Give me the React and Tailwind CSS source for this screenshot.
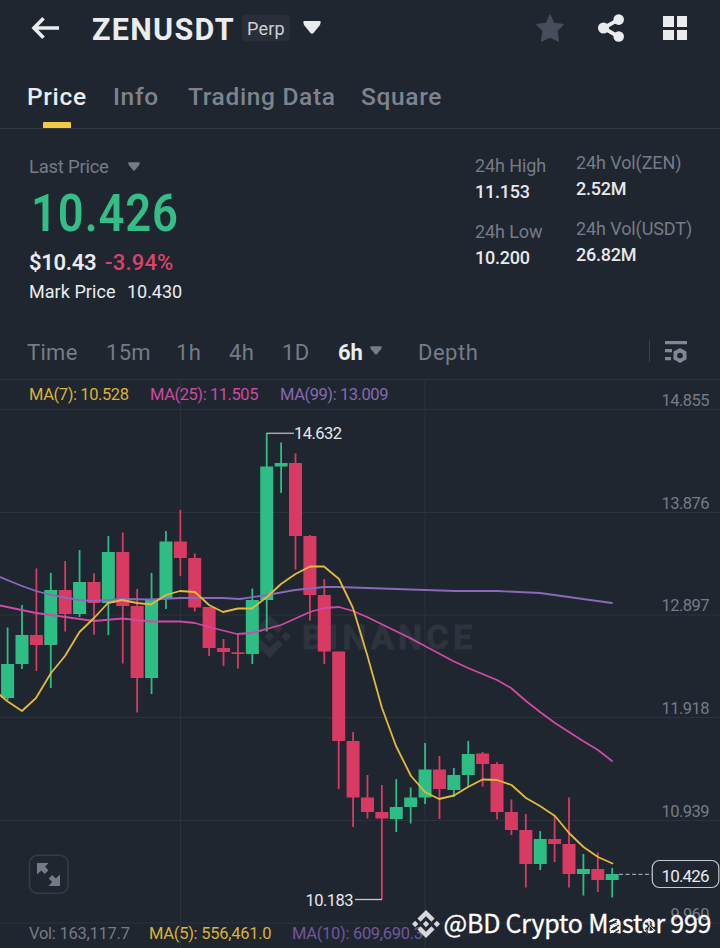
import { SiBinance } from 'react-icons/si';

const TABS = [
  { label: 'Price',        width: 'w-[86px]',  active: true },
  { label: 'Info',         width: 'w-[75px]' },
  { label: 'Trading Data', width: 'w-[173px]' },
  { label: 'Square',       width: 'w-[90px]' },
];

const INTERVALS = [
  { label: 'Time', width: 'w-[79px]' },
  { label: '15m',  width: 'w-[70px]' },
  { label: '1h',   width: 'w-[53px]' },
  { label: '4h',   width: 'w-[53px]' },
  { label: '1D',   width: 'w-[56px]' },
];

// [up, high, bodyTop, bodyBottom, low] in chart pixels
const CANDLES = [
  [1, 627.5, 664, 698, 700],
  [1, 605, 635, 664, 669],
  [0, 568.5, 635, 645, 671],
  [1, 573, 590, 645, 688],
  [0, 561, 590, 614, 631.5],
  [1, 550, 582, 614, 617],
  [0, 573.5, 582, 603, 634.5],
  [1, 536, 552, 603, 635],
  [0, 532.5, 552, 606, 663.5],
  [0, 589, 606, 678, 712.5],
  [1, 573, 600, 678, 694],
  [1, 531, 541.5, 598, 609],
  [0, 510, 541.5, 558, 576],
  [0, 553.5, 558, 607.5, 611.5],
  [0, 607, 607, 648, 656],
  [0, 639, 648, 652, 666],
  [0, 634, 652.3, 654, 668.5],
  [1, 588.5, 600, 654, 664],
  [1, 433, 466.5, 600, 631.5],
  [1, 442.5, 463, 466.5, 493],
  [0, 453.5, 463, 536, 569.5],
  [0, 535, 536, 595, 620.5],
  [0, 579, 595, 651.5, 664],
  [0, 651.5, 651.5, 741, 789],
  [0, 732, 741, 797.5, 827],
  [0, 775, 797.5, 812, 818.5],
  [0, 785, 812, 818.5, 899.5],
  [1, 779, 807, 819, 832],
  [1, 787.5, 797.5, 807, 823.5],
  [1, 743, 769.5, 797.5, 804],
  [0, 756, 769.5, 789, 819],
  [1, 768, 775, 790, 797],
  [1, 741, 754, 775, 787],
  [0, 752, 753.5, 764, 786.5],
  [0, 762, 764, 812, 819.5],
  [0, 799.5, 812, 830, 835],
  [0, 814, 830, 864, 887.5],
  [1, 831, 839, 864, 870],
  [0, 815, 839, 844, 862],
  [0, 797.5, 844, 874, 887.5],
  [1, 854, 869, 874, 895.5],
  [0, 852.5, 869, 880, 892],
  [1, 868, 874, 880, 897.5],
];

const MA7 = '0,695 7,701 22,711 36,698 51,673 65,656 79.5,632 94,618 108,603 122,600 137,603 151,604.5 166,595 180,591 195,592 209,605 223,612 238,608.5 252,608.5 267,597 281,584 295.5,574 310,566.5 324,566.5 339,579 353,608 367.5,656 382,708 396,746 411,776 425,792 439,799 454,795.5 468,787 482.5,779.5 497,780 511.5,785 526,798 540,806 555,816 569,833 583.5,847 598,857 612.5,863.5';
const MA25 = '0,605.5 36,613 51,615 94,621 122,618.5 151,621.5 180,621.5 195,623 209,627 237,634 252,633 281,625 310,612 324,608 339,607 353,611 367,617 410,638 453,661 468,668 497,680 511,688 526,701 540,712 555,723 583,741 598,750 612,761';
const MA99 = '0,577 22,586 36,591 51,595 79,600 94,601 122,599 151,599.5 180,598 223,598 240,599 267,595 295,590 310,588.5 324,587 339,587 367,588 455,591 497,591 540,593 583,599 612,603';

const GRID = [379.5, 409.5, 512.5, 615, 717.5, 820.5, 923];
const PRICES = [
  ['14.855', 406], ['13.876', 509], ['12.897', 611], ['11.918', 714], ['10.939', 817], ['9.960', 919.5],
];

const UP = '#2ebd85';
const DOWN = '#d93a63';

function Caret({ className }) {
  return (
    <svg viewBox="0 0 18 13" className={className} fill="currentColor">
      <path d="M1.5 0h15Q18 0 17.6 1.8L17 4 10.5 12q-1.5 1.4-3 0L1 4 .4 1.8Q0 0 1.5 0z" />
    </svg>
  );
}

function Stat({ label, value }) {
  return (
    <div className="h-[66px]">
      <p className="text-[18px] leading-[26px] tracking-[-0.1px] whitespace-nowrap text-[#757c87]">{label}</p>
      <p className="text-[18px] leading-[26px] font-medium tracking-[-0.25px] whitespace-nowrap text-[#e6e8ec]">{value}</p>
    </div>
  );
}

function Header() {
  return (
    <header className="flex h-14 items-center pl-[31px]">
      <svg viewBox="0 0 28 22" className="h-[22px] w-7 shrink-0" fill="none" stroke="#eaecef" strokeWidth="3.6">
        <path d="M28 11H3M12.500 1.300 3 11l9.500 9.700" />
      </svg>
      <h1 className="mt-[3px] ml-[33px] w-[150px] text-[30.500px] leading-10 font-bold tracking-[1.3px] text-[#eaecef]">ZENUSDT</h1>
      <span className="-mt-px flex h-[26px] w-12 shrink-0 items-center justify-center rounded bg-[#292e38] pt-0.5 text-[18px] tracking-[0.2px] text-[#cdd1d8]">Perp</span>
      <Caret className="-mt-px ml-[13px] h-[13px] w-[18px] shrink-0 text-[#eaecef]" />
      <svg viewBox="0 0 28 28" className="ml-[215px] h-7 w-7 shrink-0" fill="#474d5a" stroke="#474d5a" strokeWidth="1.600" strokeLinejoin="round">
        <path d="m14 1.300 3.700 8.200 9.200 1-6.200 6.400 1.600 9.900L14 22.900l-8.300 3.900 1.600-9.900L1.100 10.500l9.200-1z" />
      </svg>
      <svg viewBox="0 0 26 28" className="ml-[34px] h-7 w-[26px] shrink-0" fill="#eaecef" stroke="#eaecef">
        <path d="M20.500 5.600 5.500 14l15 8.600" fill="none" strokeWidth="3.800" />
        <circle cx="20.700" cy="5.600" r="5.300" stroke="none" />
        <circle cx="5.500" cy="14" r="5.500" stroke="none" />
        <circle cx="20.700" cy="22.500" r="5.300" stroke="none" />
      </svg>
      <div className="ml-[39px] grid h-6 w-6 shrink-0 grid-cols-2 gap-[3px]">
        <span className="bg-[#eaecef]" />
        <span className="bg-[#eaecef]" />
        <span className="bg-[#eaecef]" />
        <span className="bg-[#eaecef]" />
      </div>
    </header>
  );
}

function Tabs() {
  return (
    <nav className="flex h-[73px] border-b border-[#333943] pl-[27px]">
      {TABS.map(t => (
        <div key={t.label} className={`flex shrink-0 flex-col justify-between pt-[25px] ${t.width}`}>
          <span className={`text-[24.500px] leading-8 font-medium tracking-[0.65px] whitespace-nowrap ${t.active ? 'text-[#eaecef]' : 'text-[#7d8490]'}`}>
            {t.label}
          </span>
          {t.active && <span className="ml-4 h-1.5 w-7 rounded-t-[1px] bg-[#f0cb45]" />}
        </div>
      ))}
    </nav>
  );
}

function Ticker() {
  return (
    <section className="flex h-[197px]">
      <div className="w-[475px] shrink-0 pt-6 pl-[29px]">
        <div className="flex h-7 items-center">
          <span className="w-[99px] pt-px text-[18.500px] tracking-[-0.25px] text-[#757c87]">Last Price</span>
          <Caret className="-mt-0.5 h-[9px] w-3 text-[#757c87]" />
        </div>
        <p className="mt-[5px] ml-0.5 h-14 origin-left scale-x-[0.89] text-[51px] leading-[56px] font-semibold tracking-[1px] text-[#34bd87]">10.426</p>
        <div className="mt-[7px] flex h-7 items-center text-[22px] leading-7">
          <span className="w-[76px] font-semibold tracking-[-0.300px] text-[#eaecef]">$10.43</span>
          <span className="font-medium tracking-[0.2px] text-[#d8456a]">-3.94%</span>
        </div>
        <p className="flex h-7 items-center text-[18px] text-[#eaecef]">
          <span className="w-[98px] tracking-[0.05px]">Mark Price</span>
          <span className="tracking-[-0.05px]">10.430</span>
        </p>
      </div>
      <div className="w-[101px] shrink-0 pt-6">
        <Stat label="24h High" value="11.153" />
        <Stat label="24h Low" value="10.200" />
      </div>
      <div className="pt-[21px]">
        <Stat label="24h Vol(ZEN)" value="2.52M" />
        <Stat label="24h Vol(USDT)" value="26.82M" />
      </div>
    </section>
  );
}

function IntervalBar() {
  return (
    <div className="flex h-[53px] items-center pl-[27px] text-[22px] tracking-[0.3px] text-[#757c87]">
      {INTERVALS.map(i => (
        <span key={i.label} className={`shrink-0 ${i.width}`}>{i.label}</span>
      ))}
      <span className="w-8 shrink-0 font-bold tracking-[-0.2px] text-[#eaecef]">6h</span>
      <Caret className="-mt-1 h-[9px] w-3 shrink-0" />
      <span className="ml-9 w-[231px] shrink-0 tracking-[0.500px]">Depth</span>
      <span className="-mt-1 h-[22px] w-px bg-[#3b414c]" />
      <svg viewBox="0 0 22 22" className="-mt-0.5 ml-[15px] h-[22px] w-[22px] shrink-0" fill="#828994">
        <path d="M0 0h22v3.200H0zM0 8h7v3.200H0zM0 16h6v3.200H0z" />
        <path fillRule="evenodd" d="m15 7 6.500 3.600v7.600L15 22l-6.500-3.800v-7.600zM15 11.700a2.900 2.900 0 1 0 0 5.800 2.900 2.900 0 0 0 0-5.800z" />
      </svg>
    </div>
  );
}

function CandleChart() {
  return (
    <svg viewBox="0 378 720 570" className="block h-[570px] w-[720px]" fontFamily="Roboto, sans-serif">
      {GRID.map(y => <path key={y} d={`M0 ${y}H720`} stroke="#2c323c" />)}
      <path d="M180.500 379V948M425 379V948" stroke="#2c323c" />

      {/* Brand mark behind the candles */}
      <SiBinance x="248" y="615" size={43} color="#2e343e" />
      <text x="302" y="649" fontSize="34" fontWeight="700" textLength="170" fill="#2e343e" stroke="#2e343e" strokeWidth="0.8">BINANCE</text>

      {CANDLES.map(([up, high, top, bottom, low], i) => {
        const x = 7.6 + i * 14.395;
        const color = up ? UP : DOWN;
        return (
          <g key={i} fill={color}>
            <rect x={x - 0.9} y={high} width="1.8" height={low - high} />
            <rect x={x - 6.5} y={top} width="13" height={bottom - top} />
          </g>
        );
      })}

      <g fill="none" strokeWidth="1.800" strokeLinejoin="round" strokeLinecap="round">
        <polyline points={MA99} stroke="#8b68bd" />
        <polyline points={MA25} stroke="#d049a4" />
        <polyline points={MA7} stroke="#e5b93c" />
      </g>

      {/* High / low callouts */}
      <path d="M266.500 433.300H294" stroke="#a3a8b0" strokeWidth="1.500" />
      <path d="M355 899.500H382" stroke="#c6cad0" strokeWidth="1.300" />
      <g fontSize="16.500" fill="#e6e8ec">
        <text x="294" y="439" textLength="48">14.632</text>
        <text x="305.500" y="906" textLength="48">10.183</text>
      </g>

      <g fontSize="16.500" fill="#757c87" textAnchor="end">
        {PRICES.map(([label, y]) => (
          <text key={label} x="709.500" y={y} textLength={label.length === 6 ? 48 : 39}>{label}</text>
        ))}
      </g>

      {/* Current price */}
      <path d="M619 874.300H652" stroke="#9ba1aa" strokeWidth="1.300" strokeDasharray="4 2.500" />
      <rect x="652.300" y="860.500" width="66.500" height="27" rx="7" fill="#1f262f" stroke="#c3c7ce" strokeWidth="1.200" />
      <text x="661.500" y="882" fontSize="17" textLength="48" fill="#eaecef">10.426</text>

      {/* Fullscreen toggle */}
      <rect x="29.500" y="855.300" width="38.500" height="38" rx="8" fill="none" stroke="#363c47" strokeWidth="1.500" />
      <path d="M37 863h11.500l-3.500 3.700 3.500 3.500-3.700 3.700-3.500-3.500-4.300 4zM60 886H48.500l3.700-3.900-3.500-3.500 3.500-3.600 3.600 3.500 4.200-4z" fill="#747b86" />

      <g fontSize="16.500">
        <text x="29" y="400" textLength="100" fill="#dbb23a">MA(7): 10.528</text>
        <text x="150" y="400" textLength="108.500" fill="#cb4ba3">MA(25): 11.505</text>
        <text x="280" y="400" textLength="108.500" fill="#846ab4">MA(99): 13.009</text>
        <text x="29" y="939" textLength="101" fill="#757c87">Vol: 163,117.7</text>
        <text x="149" y="939" textLength="122.500" fill="#dbb23a">MA(5): 556,461.0</text>
        <text x="292" y="939" textLength="131" fill="#70589c">MA(10): 609,690.3</text>
      </g>

      {/* Author signature */}
      <SiBinance x="412" y="910" size={28} color="#d5d7db" />
      <text x="443.500" y="933" fontSize="25" textLength="268" fill="#ffffff" stroke="#ffffff" strokeWidth="0.3" fontFamily='"Noto Sans CJK SC", "Noto Sans", sans-serif'>@BD Crypto Master 999</text>
      {/* Ornamental scratches over the two vowels */}
      <g fill="none" strokeWidth="1.300">
        <path d="M609 922l5-3 5 3M610 926l9-4M610 933l9-5M618 919v14M645 921l8 3M649 918v15M644 931l4-5M655 931l-4-5" stroke="#ffffff" />
        <path d="M609 924l8-4M611 930l8-5M613 934l6-4M645 923l4 3-4 4M651 922v4l4 3M647 934v-4" stroke="#1f262f" />
      </g>
    </svg>
  );
}

export default function App() {
  return (
    <main className="h-[948px] w-[720px] overflow-hidden bg-[#1f262f] font-[Roboto,sans-serif]">
      <Header />
      <Tabs />
      <Ticker />
      <IntervalBar />
      <div className="-mt-px">
        <CandleChart />
      </div>
    </main>
  );
}
